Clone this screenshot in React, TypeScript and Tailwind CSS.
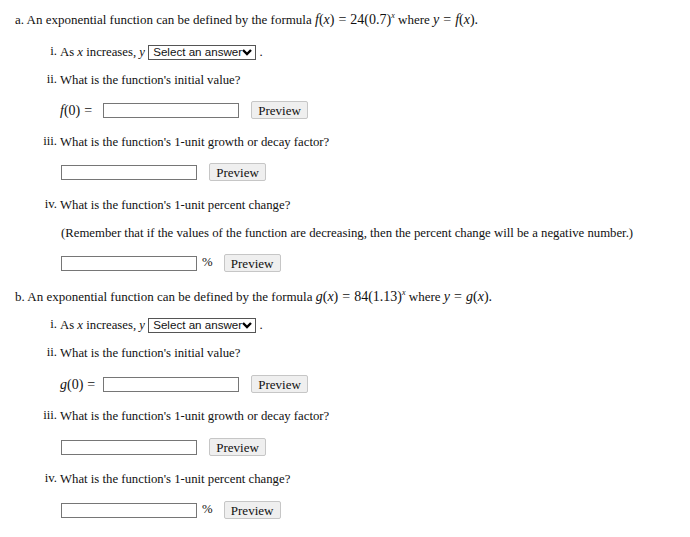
import React from "react";

function Mi({ children }: { children: React.ReactNode }) {
  return <span className="italic">{children}</span>;
}

function Eq() {
  return <span className="mx-[4px]">=</span>;
}

function SelectBox() {
  return (
    <span className="inline-flex items-center align-middle h-[15px] w-[108px] border border-[#555] pl-[4px] pr-[5px] font-['Liberation_Sans'] text-[11.6px] leading-none justify-between -mt-[2px]">
      <span className="whitespace-nowrap">Select an answer</span>
      <svg width="10" height="8" viewBox="0 0 10 8" className="shrink-0">
        <polyline points="1,2 5,6 9,2" fill="none" stroke="#000" strokeWidth="2.4" />
      </svg>
    </span>
  );
}

function TextInput() {
  return <span className="inline-block h-[15px] w-[136px] border border-[#767676] bg-white" />;
}

function PreviewBtn({ ml = "ml-[12px]" }: { ml?: string }) {
  return (
    <button className={`${ml} h-[18px] w-[57px] bg-[#efefef] border border-[#c6c6c6] rounded-[2px] text-[13px] leading-none font-['Liberation_Serif'] text-[#111]`}>
      Preview
    </button>
  );
}

function Item({ mark, mt, children }: { mark: string; mt: string; children: React.ReactNode }) {
  return (
    <div className={`${mt} flex items-center h-[16px] shrink-0`}>
      <span className="w-[42px] text-right shrink-0">{mark}</span>
      <span className="ml-[3px] block whitespace-nowrap leading-[16px]">{children}</span>
    </div>
  );
}

type PartProps = {
  letter: string;
  f: string;
  coef: string;
  base: string;
  first: string;
  firstItem: string;
  valueGap: string;
  inputGap: string;
  ivGap: string;
  remember?: boolean;
};

function Part({ letter, f, coef, base, first, firstItem, valueGap, inputGap, ivGap, remember }: PartProps) {
  return (
    <>
      <div className={`${first} h-[16px] shrink-0 leading-[16px] whitespace-nowrap text-[13px]`}>
        {letter}. An exponential function can be defined by the formula{" "}
        <span className="text-[14px]">
          <Mi>{f}</Mi>(<Mi>x</Mi>)
          <Eq />
          {coef}({base})
          <sup className="italic text-[8px] -top-[6px]">x</sup>
        </span>{" "}
        <span className="text-[13px]">where</span>{" "}
        <span className="text-[14px]">
          <Mi>y</Mi>
          <Eq />
          <Mi>{f}</Mi>(<Mi>x</Mi>).
        </span>
      </div>

      <Item mark="i." mt={firstItem}>
        As <Mi>x</Mi> increases, <Mi>y</Mi> <SelectBox /> .
      </Item>

      <Item mark="ii." mt="mt-[12px]">
        What is the function's initial value?
      </Item>

      <div className={`${valueGap} flex items-center h-[20px] shrink-0 pl-[45px]`}>
        <span className="w-[43px] text-[14px] whitespace-nowrap">
          <Mi>{f}</Mi>(0)
          <Eq />
        </span>
        <TextInput />
        <PreviewBtn />
      </div>

      <Item mark="iii." mt="mt-[14px]">
        What is the function's 1-unit growth or decay factor?
      </Item>

      <div className={`${inputGap} flex items-center h-[20px] shrink-0 pl-[46px]`}>
        <TextInput />
        <PreviewBtn />
      </div>

      <Item mark="iv." mt={ivGap}>
        What is the function's 1-unit percent change?
      </Item>

      {remember && (
        <div className="mt-[12px] h-[16px] shrink-0 leading-[16px] whitespace-nowrap pl-[46px]">
          (Remember that if the values of the function are decreasing, then the percent change will be a negative number.)
        </div>
      )}

      <div className={`${inputGap} flex items-center h-[20px] shrink-0 pl-[46px]`}>
        <TextInput />
        <span className="ml-[5px]">%</span>
        <PreviewBtn ml="ml-[11px]" />
      </div>
    </>
  );
}

export default function App() {
  return (
    <div className="w-[690px] h-[537px] bg-white text-[#111] font-['Liberation_Serif'] text-[12.75px] pl-[15px] flex flex-col">
      <Part
        letter="a"
        f="f"
        coef="24"
        base="0.7"
        first="mt-[12px]"
        firstItem="mt-[16px]"
        valueGap="mt-[12px]"
        inputGap="mt-[12px]"
        ivGap="mt-[15px]"
        remember
      />
      <Part
        letter="b"
        f="g"
        coef="84"
        base="1.13"
        first="mt-[16px]"
        firstItem="mt-[12px]"
        valueGap="mt-[13px]"
        inputGap="mt-[13px]"
        ivGap="mt-[14px]"
      />
    </div>
  );
}
